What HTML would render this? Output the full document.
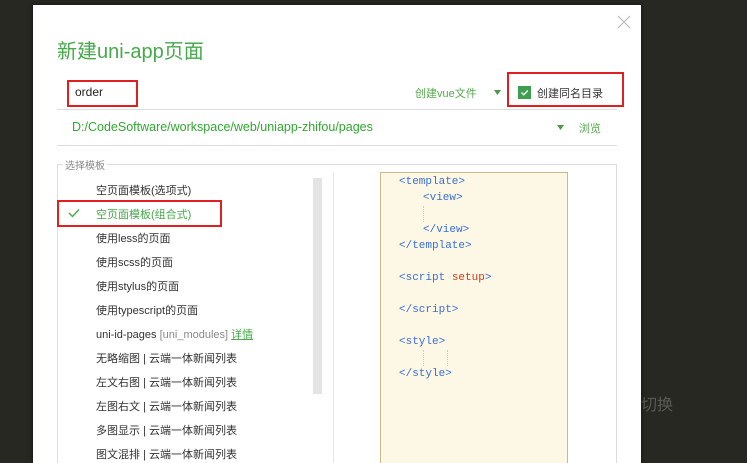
<!DOCTYPE html>
<html style="width:747px;height:463px;overflow:hidden"><head><meta charset="utf-8"><style>
*{margin:0;padding:0;box-sizing:border-box}
body{width:747px;height:463px;background:#272822;position:relative;overflow:hidden;font-family:"Liberation Sans","Noto Sans CJK SC",sans-serif}
.a{position:absolute;white-space:nowrap}
#dlg{position:absolute;left:33px;top:5px;width:608px;height:458px;background:#fff;box-shadow:0 0 4px #111;overflow:hidden}
.li{position:absolute;left:63px;font-size:11px;color:#333;line-height:14px}
.code{position:absolute;left:18px;font-family:"Liberation Mono","DejaVu Sans Mono",monospace;font-size:11px;color:#3a6fd0;line-height:14px}
</style></head><body>
<div class="a" style="left:641px;top:391px;font-size:16px;color:#5a5a55">切换</div>
<div id="dlg">
<svg class="a" style="left:584px;top:10px" width="14" height="14"><path d="M1 1L13 13M13 1L1 13" stroke="#bbb" stroke-width="1.2"/></svg>
<div class="a" style="left:24px;top:30px;font-size:20px;color:#46a94b">新建uni-app页面</div>
<div class="a" style="left:34px;top:75px;width:71px;height:27px;border:2px solid #e02020"></div>
<div class="a" style="left:42px;top:80px;font-size:12px;color:#222">order</div>
<div class="a" style="left:382px;top:80px;font-size:11px;color:#57a84f">创建vue文件</div>
<svg class="a" style="left:461px;top:85px" width="7" height="5"><path d="M0 0H7L3.5 5Z" fill="#4a9a4a"/></svg>
<div class="a" style="left:474px;top:67px;width:117px;height:35px;border:2px solid #e02020"></div>
<div class="a" style="left:485px;top:81px;width:13px;height:13px;background:#3f9f50"></div>
<svg class="a" style="left:487px;top:83px" width="9" height="9"><path d="M1.5 4.5L3.8 6.8L7.8 2.5" stroke="#fff" stroke-width="1.3" fill="none"/></svg>
<div class="a" style="left:504px;top:80px;font-size:11px;color:#333">创建同名目录</div>
<div class="a" style="left:24px;top:104px;width:560px;height:1px;background:#ddd"></div>
<div class="a" style="left:39px;top:115px;font-size:12.5px;color:#2fa82f">D:/CodeSoftware/workspace/web/uniapp-zhifou/pages</div>
<svg class="a" style="left:524px;top:120px" width="7" height="5"><path d="M0 0H7L3.5 5Z" fill="#4a9a4a"/></svg>
<div class="a" style="left:546px;top:115px;font-size:11px;color:#57a84f">浏览</div>
<div class="a" style="left:24px;top:140px;width:560px;height:1px;background:#ddd"></div>
<div class="a" style="left:24px;top:159px;width:560px;height:320px;border:1px solid #ddd"></div>
<div class="a" style="left:30px;top:152px;font-size:10px;color:#888;background:#fff;padding:0 2px">选择模板</div>
<div class="a" style="left:280px;top:173px;width:9px;height:216px;background:#e4e4e4"></div>
<div class="a" style="left:300px;top:167px;width:1px;height:300px;background:#e5e5e5"></div>
<div class="li" style="top:179px">空页面模板(选项式)</div>
<div class="li" style="top:203px;color:#46a94b">空页面模板(组合式)</div>
<svg class="a" style="left:35px;top:203px" width="12" height="10"><path d="M1 5L4.5 8.5L11 1.5" stroke="#46a94b" stroke-width="1.4" fill="none"/></svg>
<div class="a" style="left:24px;top:195px;width:165px;height:27px;border:2px solid #e02020"></div>
<div class="li" style="top:227px">使用less的页面</div>
<div class="li" style="top:251px">使用scss的页面</div>
<div class="li" style="top:275px">使用stylus的页面</div>
<div class="li" style="top:299px">使用typescript的页面</div>
<div class="li" style="top:323px">uni-id-pages <span style="color:#888">[uni_modules]</span> <span style="color:#46a94b;text-decoration:underline">详情</span></div>
<div class="li" style="top:347px">无略缩图 | 云端一体新闻列表</div>
<div class="li" style="top:371px">左文右图 | 云端一体新闻列表</div>
<div class="li" style="top:395px">左图右文 | 云端一体新闻列表</div>
<div class="li" style="top:419px">多图显示 | 云端一体新闻列表</div>
<div class="li" style="top:443px">图文混排 | 云端一体新闻列表</div>
<div class="a" style="left:347px;top:167px;width:188px;height:310px;background:#fdf8e6;border:1px solid #c9b98a">
<div class="code" style="top:2px">&lt;template&gt;</div>
<div class="code" style="top:18px;left:42px">&lt;view&gt;</div>
<div class="a" style="left:42px;top:33px;width:1px;height:16px;border-left:1px dotted #ccc"></div>
<div class="code" style="top:50px;left:42px">&lt;/view&gt;</div>
<div class="code" style="top:66px">&lt;/template&gt;</div>
<div class="code" style="top:98px">&lt;script <span style="color:#d03a1a">setup</span>&gt;</div>
<div class="code" style="top:130px">&lt;/script&gt;</div>
<div class="code" style="top:162px">&lt;style&gt;</div>
<div class="a" style="left:42px;top:177px;width:1px;height:16px;border-left:1px dotted #ccc"></div>
<div class="a" style="left:66px;top:177px;width:1px;height:16px;border-left:1px dotted #ccc"></div>
<div class="code" style="top:194px">&lt;/style&gt;</div>
</div>
</div>
</body></html>
